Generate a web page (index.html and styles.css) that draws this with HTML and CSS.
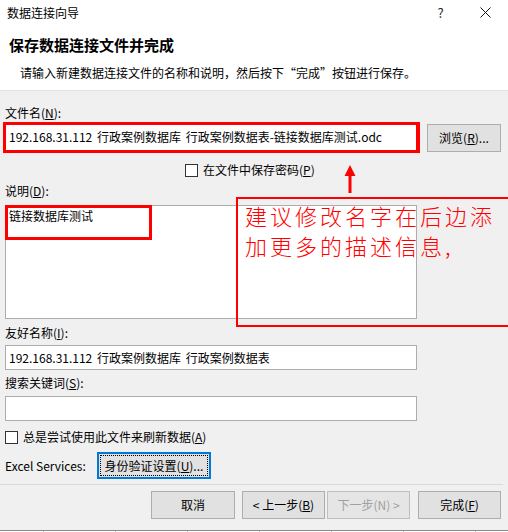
FILE: index.html
```html
<!DOCTYPE html>
<html>
<head>
  <title>数据连接向导</title>
  <link rel="stylesheet" href="styles.css">
</head>
<body>
  <div class="dialog">
    <div class="top">
      <div class="titlebar">
        <span class="title">数据连接向导</span>
        <span class="tb-btn help">?</span>
        <span class="tb-btn close">
          <svg width="11" height="11" viewBox="0 0 11 11"><path d="M0.5 0.5 L10.5 10.5 M10.5 0.5 L0.5 10.5" stroke="#111" stroke-width="1"/></svg>
        </span>
      </div>
      <div class="header">
        <h1>保存数据连接文件并完成</h1>
        <p>请输入新建数据连接文件的名称和说明，然后按下“完成”按钮进行保存。</p>
      </div>
    </div>

    <div class="content">
      <div class="label">文件名(<u>N</u>):</div>
      <div class="file-row">
        <div class="field file-field">192.168.31.112 行政案例数据库 行政案例数据表-链接数据库测试.odc</div>
        <button class="btn browse">浏览(<u>R</u>)...</button>
      </div>

      <div class="check-row save-pw">
        <span class="box"></span>
        <span>在文件中保存密码(<u>P</u>)</span>
      </div>

      <div class="label desc-label">说明(<u>D</u>):</div>
      <div class="area">链接数据库测试</div>

      <div class="label after-area">友好名称(<u>I</u>):</div>
      <div class="field">192.168.31.112 行政案例数据库 行政案例数据表</div>

      <div class="label after-field">搜索关键词(<u>S</u>):</div>
      <div class="field"></div>

      <div class="check-row refresh">
        <span class="box"></span>
        <span>总是尝试使用此文件来刷新数据(<u>A</u>)</span>
      </div>

      <div class="excel-row">
        <span class="excel-label">Excel Services:</span>
        <button class="btn auth"><span class="focus">身份验证设置(<u>U</u>)...</span></button>
      </div>

      <div class="separator"></div>

      <div class="nav-row">
        <button class="btn nav cancel">取消</button>
        <button class="btn nav back">&lt; 上一步(<u>B</u>)</button>
        <button class="btn nav next" disabled>下一步(N) &gt;</button>
        <button class="btn nav finish">完成(<u>F</u>)</button>
      </div>
    </div>

    <div class="taskstrip"></div>

    <!-- red annotations drawn over the dialog -->
    <div class="mark mark-file"></div>
    <svg class="arrow" width="12" height="28" viewBox="0 0 12 28">
      <path d="M6 0 L11.5 11 L7.5 11 L7.5 28 L4.5 28 L4.5 11 L0.5 11 Z" fill="#f00"/>
    </svg>
    <div class="mark mark-desc"></div>
    <div class="mark mark-note"></div>
    <div class="note">建议修改名字在后边添<br>加更多的描述信息,</div>
  </div>
</body>
</html>
```

FILE: styles.css
```css
* {
  box-sizing: border-box;
}

body {
  margin: 0;
  font-family: "Noto Sans CJK SC", "Noto Sans", sans-serif;
  font-size: 12px;
  color: #000;
}

.dialog {
  position: relative;
  width: 508px;
  height: 532px;
  overflow: hidden;
  background: #f0f0f0;
}

.top {
  background: #fff;
  border-bottom: 1px solid #e3e3e3;
}

.titlebar {
  display: flex;
  align-items: center;
  height: 25px;
}

.title {
  flex: 1;
  padding-left: 7px;
  line-height: 16px;
}

.tb-btn {
  width: 45px;
  display: flex;
  justify-content: center;
  align-items: center;
}

.help {
  font-size: 13px;
  line-height: 16px;
  color: #222;
}

.header {
  height: 65px;
  padding-top: 10px;
}

.header h1 {
  margin: 0;
  padding-left: 9px;
  font-size: 15px;
  line-height: 20px;
  font-weight: bold;
}

.header p {
  margin: 10px 0 0;
  padding-left: 20px;
  line-height: 16px;
}

.content {
  padding: 14px 0 0 5px;
}

.label {
  line-height: 16px;
}

.file-row {
  display: flex;
  align-items: flex-start;
  margin-top: 2px;
}

.field {
  width: 412px;
  height: 25px;
  background: #fff;
  border: 1px solid #adadad;
  padding-left: 3px;
  line-height: 23px;
  white-space: nowrap;
  overflow: hidden;
  word-spacing: 2px;
}

.file-field {
  height: 28px;
  line-height: 26px;
  border-color: #f00;
}

.btn {
  font-family: inherit;
  font-size: 12px;
  color: #000;
  background: #e1e1e1;
  border: 1px solid #adadad;
  padding: 0;
  line-height: 16px;
}

.browse {
  width: 74px;
  height: 28px;
  margin: 1px 0 0 10px;
}

.check-row {
  display: flex;
  align-items: center;
  height: 16px;
  line-height: 16px;
}

.box {
  width: 13px;
  height: 13px;
  background: #fff;
  border: 1px solid #333;
  margin-right: 5px;
}

.save-pw {
  margin: 10px 0 0 180px;
}

.desc-label {
  margin-top: 5px;
}

.area {
  width: 412px;
  height: 114px;
  margin-top: 6px;
  background: #fff;
  border: 1px solid #adadad;
  padding: 2px 3px;
  line-height: 16px;
}

.after-area {
  margin: 6px 0 4px;
}

.after-field {
  margin: 5px 0 5px;
}

.refresh {
  margin-top: 8px;
}

.excel-row {
  display: flex;
  align-items: center;
  margin-top: 7px;
}

.excel-label {
  width: 92px;
  line-height: 16px;
}

.auth {
  width: 114px;
  height: 27px;
  border: 2px solid #0078d7;
  padding: 1px;
}

.auth .focus {
  display: flex;
  align-items: center;
  justify-content: center;
  height: 100%;
  border: 1px dotted #000;
}

.separator {
  margin: 5px 0 0 -5px;
  width: 503px;
  height: 1px;
  background: #d9d9d9;
}

.nav-row {
  display: flex;
  margin-top: 6px;
  padding-left: 146px;
}

.nav {
  height: 28px;
  width: 83px;
}

.cancel {
  width: 84px;
  margin-right: 7px;
}

.back {
  margin-right: 2px;
}

.next {
  margin-right: 8px;
  color: #a0a0a0;
  border-color: #bfbfbf;
  background: #e5e5e5;
}

.taskstrip {
  margin-top: 11px;
  height: 3px;
  border-top: 1px solid #8a8a8a;
  background-color: #fff;
  background-image: repeating-linear-gradient(to right, transparent 0, transparent 43px, #c8c8c8 43px, #c8c8c8 44px, transparent 44px, transparent 72px);
}

.mark {
  position: absolute;
  border: 3px solid #f00;
}

.mark-file {
  left: 3px;
  top: 122px;
  width: 417px;
  height: 31px;
}

.mark-desc {
  left: 5px;
  top: 205px;
  width: 147px;
  height: 35px;
}

.mark-note {
  left: 236px;
  top: 197px;
  width: 290px;
  height: 130px;
  border-width: 2px;
}

.arrow {
  position: absolute;
  left: 344px;
  top: 165px;
}

.note {
  position: absolute;
  left: 245px;
  top: 200px;
  font-size: 22px;
  line-height: 30px;
  letter-spacing: 3px;
  font-weight: 300;
  color: #f00;
}
```
